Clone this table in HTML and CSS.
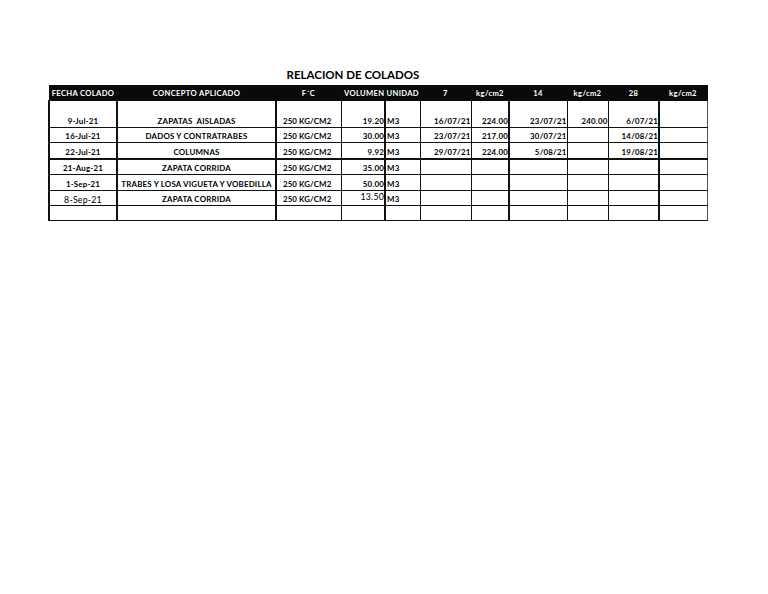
FILE: index.html
```html
<!DOCTYPE html>
<html lang="es">
<head>
<meta charset="utf-8">
<title>Relacion de colados</title>
<link rel="stylesheet" href="styles.css">
</head>
<body>
<div class="page">
  <h1 class="title">RELACION DE COLADOS</h1>
  <table class="sheet">
    <colgroup>
      <col class="c1"><col class="c2"><col class="c3"><col class="c4"><col class="c5"><col class="c6"><col class="c7"><col class="c8"><col class="c9"><col class="c10"><col class="c11">
    </colgroup>
    <thead>
      <tr class="head">
        <th>FECHA COLADO</th>
        <th>CONCEPTO APLICADO</th>
        <th>F´C</th>
        <th class="vol">VOLUMEN</th>
        <th class="uni">UNIDAD</th>
        <th>7</th>
        <th>kg/cm2</th>
        <th>14</th>
        <th>kg/cm2</th>
        <th>28</th>
        <th>kg/cm2</th>
      </tr>
    </thead>
    <tbody>
      <tr class="first">
        <td class="ctr b-l2 b-r2">9-Jul-21</td>
        <td class="ctr b-r2">ZAPATAS &nbsp;AISLADAS</td>
        <td class="fc">250 KG/CM2</td>
        <td class="num b-r2">19.20</td>
        <td class="unit">M3</td>
        <td class="num">16/07/21</td>
        <td class="num">224.00</td>
        <td class="num b-l2">23/07/21</td>
        <td class="num">240.00</td>
        <td class="num b-r2">6/07/21</td>
        <td class="last"></td>
      </tr>
      <tr class="r15">
        <td class="ctr b-l2 b-r2">16-Jul-21</td>
        <td class="ctr b-r2">DADOS Y CONTRATRABES</td>
        <td class="fc">250 KG/CM2</td>
        <td class="num b-r2">30.00</td>
        <td class="unit">M3</td>
        <td class="num">23/07/21</td>
        <td class="num">217.00</td>
        <td class="num b-l2">30/07/21</td>
        <td class="num"></td>
        <td class="num b-r2">14/08/21</td>
        <td class="last"></td>
      </tr>
      <tr class="r16 thick-b">
        <td class="ctr b-l2 b-r2">22-Jul-21</td>
        <td class="ctr b-r2">COLUMNAS</td>
        <td class="fc">250 KG/CM2</td>
        <td class="num b-r2">9.92</td>
        <td class="unit">M3</td>
        <td class="num">29/07/21</td>
        <td class="num">224.00</td>
        <td class="num b-l2">5/08/21</td>
        <td class="num"></td>
        <td class="num b-r2">19/08/21</td>
        <td class="last"></td>
      </tr>
      <tr class="r15">
        <td class="ctr b-l2 b-r2">21-Aug-21</td>
        <td class="ctr b-r2">ZAPATA CORRIDA</td>
        <td class="fc">250 KG/CM2</td>
        <td class="num b-r2">35.00</td>
        <td class="unit">M3</td>
        <td></td><td></td><td class="b-l2"></td><td></td><td class="b-r2"></td><td class="last"></td>
      </tr>
      <tr class="r16">
        <td class="ctr b-l2 b-r2">1-Sep-21</td>
        <td class="ctr b-r2">TRABES Y LOSA VIGUETA Y VOBEDILLA</td>
        <td class="fc">250 KG/CM2</td>
        <td class="num b-r2">50.00</td>
        <td class="unit">M3</td>
        <td></td><td></td><td class="b-l2"></td><td></td><td class="b-r2"></td><td class="last"></td>
      </tr>
      <tr class="r15">
        <td class="ctr b-l2 b-r2 plain">8-Sep-21</td>
        <td class="ctr b-r2">ZAPATA CORRIDA</td>
        <td class="fc">250 KG/CM2</td>
        <td class="num b-r2 plain raised">13.50</td>
        <td class="unit">M3</td>
        <td></td><td></td><td class="b-l2"></td><td></td><td class="b-r2"></td><td class="last"></td>
      </tr>
      <tr class="r15 bottom">
        <td class="b-l2 b-r2"></td>
        <td class="b-r2"></td>
        <td></td>
        <td class="b-r2"></td>
        <td></td>
        <td></td><td></td><td class="b-l2"></td><td></td><td class="b-r2"></td><td class="last"></td>
      </tr>
    </tbody>
  </table>
</div>
</body>
</html>
```
FILE: styles.css
```css
html, body {
  margin: 0;
  padding: 0;
  background: #ffffff;
}

body {
  font-family: Lato, "Liberation Sans", sans-serif;
  color: #000;
}

.page {
  padding: 68px 0 0 48px;
  width: 658px;
}

.title {
  margin: 0 0 4px 0;
  text-align: center;
  font-size: 11.5px;
  line-height: 13px;
  font-weight: 700;
  height: 13px;
  width: 610px;
}

.sheet {
  border-collapse: collapse;
  table-layout: fixed;
  width: 658px;
  font-size: 7.9px;
  letter-spacing: 0.2px;
  font-weight: 700;
}

.c1 { width: 68px; }
.c2 { width: 159px; }
.c3 { width: 65px; }
.c4 { width: 44px; }
.c5 { width: 35px; }
.c6 { width: 51px; }
.c7 { width: 38px; }
.c8 { width: 58px; }
.c9 { width: 41px; }
.c10 { width: 51px; }
.c11 { width: 48px; }

.head th {
  background: #0a0a0a;
  color: #fff;
  height: 14px;
  padding: 0;
  font-weight: 700;
  font-size: 7.6px;
  letter-spacing: 0.35px;
  text-align: center;
  border: 1px solid #0a0a0a;
  white-space: nowrap;
  overflow: visible;
}

.head th.vol { text-align: right; padding-right: 0; }
.head th.uni { text-align: left; padding-left: 1px; }

td {
  border: 1px solid #111;
  padding: 0 1px;
  white-space: nowrap;
  vertical-align: bottom;
  line-height: 11px;
  overflow: visible;
}

.first td { height: 26px; }
.r15 td { height: 14px; }
.r16 td { height: 15px; }

.thick-b td { border-bottom: 2px solid #111; }

.b-l2 { border-left: 2px solid #111; }
.b-r2 { border-right: 2px solid #111; }

.ctr { text-align: center; }

.fc {
  text-align: left;
  padding-left: 6px;
  letter-spacing: 0.1px;
}

.num {
  text-align: right;
  padding-right: 0;
}

.unit {
  text-align: left;
  padding-left: 1px;
}

.last {
  border-right: 1px solid #555;
}

.plain {
  font-weight: 400;
  font-size: 8.8px;
}

.raised {
  vertical-align: top;
  line-height: 11px;
}

.bottom td {
  border-bottom: 1px solid #111;
}
```
